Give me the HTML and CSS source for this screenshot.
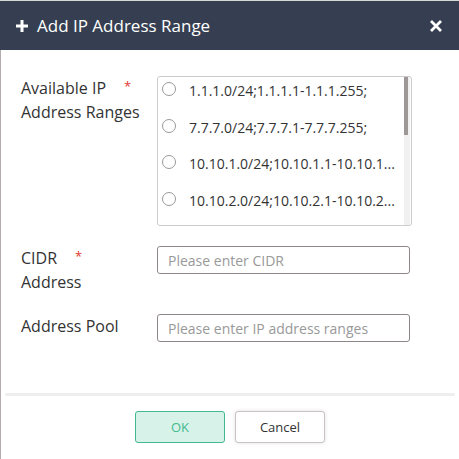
FILE: index.html
```html
<!DOCTYPE html>
<html lang="en">
<head>
  <meta charset="UTF-8">
  <meta name="viewport" content="width=device-width, initial-scale=1.0">
  <title>Add IP Address Range</title>
  <link rel="stylesheet" href="styles.css">
</head>
<body>
  <div class="dialog">
    <div class="dialog-head">
      <svg class="plus" width="12" height="12" viewBox="0 0 12 12">
        <path d="M6 0v12M0 6h12" stroke="#fff" stroke-width="3"/>
      </svg>
      <span class="title">Add IP Address Range</span>
      <svg class="close" width="12" height="12" viewBox="0 0 12 12">
        <path d="M1 1L11 11M11 1L1 11" stroke="#fff" stroke-width="2.8"/>
      </svg>
    </div>

    <div class="dialog-body">
      <div class="row">
        <div class="label">Available IP<span class="req">*</span><br>Address Ranges</div>
        <div class="field">
          <div class="range-list">
            <div class="options">
              <label class="opt"><span class="radio"></span><span class="opt-text">1.1.1.0/24;1.1.1.1-1.1.1.255;</span></label>
              <label class="opt"><span class="radio"></span><span class="opt-text">7.7.7.0/24;7.7.7.1-7.7.7.255;</span></label>
              <label class="opt"><span class="radio"></span><span class="opt-text">10.10.1.0/24;10.10.1.1-10.10.1...</span></label>
              <label class="opt"><span class="radio"></span><span class="opt-text">10.10.2.0/24;10.10.2.1-10.10.2...</span></label>
            </div>
            <div class="scroll"><div class="thumb"></div></div>
          </div>
        </div>
      </div>

      <div class="row">
        <div class="label">CIDR<span class="req">*</span><br>Address</div>
        <div class="field">
          <input class="input" type="text" placeholder="Please enter CIDR">
        </div>
      </div>

      <div class="row">
        <div class="label">Address Pool</div>
        <div class="field">
          <input class="input" type="text" placeholder="Please enter IP address ranges">
        </div>
      </div>
    </div>

    <div class="dialog-foot">
      <button class="btn btn-ok">OK</button>
      <button class="btn btn-cancel">Cancel</button>
    </div>
  </div>
</body>
</html>
```

FILE: styles.css
```css
body {
  margin: 0;
  background: #fff;
  font-family: "Open Sans", "Noto Sans", sans-serif;
  color: #333;
}

.dialog {
  width: 459px;
  height: 459px;
  border-top: 1px solid #d6d6d6;
  box-sizing: border-box;
  display: flex;
  flex-direction: column;
}

.dialog-head {
  height: 49px;
  flex: none;
  background: #353f51;
  display: flex;
  align-items: center;
  padding: 0 17px 0 16px;
}
.plus {
  margin-right: 9px;
}
.title {
  color: #fff;
  font-size: 17px;
  flex: 1;
}

.dialog-body {
  border-left: 1px solid #b3adad;
  padding: 26px 0 0 20px;
  flex: 1;
}

.row {
  display: flex;
  margin-bottom: 20px;
}
.label {
  width: 136px;
  font-size: 16px;
  line-height: 24px;
  flex: none;
}
.req {
  color: #e0362c;
  font-size: 13px;
  margin-left: 18px;
  vertical-align: top;
  line-height: 20px;
}

.field {
  width: 255px;
}

.range-list {
  height: 150px;
  border: 1px solid #ccc;
  border-radius: 3px;
  box-sizing: border-box;
  display: flex;
  overflow: hidden;
}
.options {
  flex: 1;
  min-width: 0;
  padding: 5px 0 0 4px;
}
.opt {
  display: flex;
  align-items: flex-start;
  height: 36.5px;
  font-size: 14px;
}
.radio {
  width: 12px;
  height: 12px;
  border: 1px solid #999;
  border-radius: 50%;
  flex: none;
  margin-right: 13px;
}
.opt-text {
  white-space: nowrap;
  margin-top: -1px;
}
.scroll {
  width: 6px;
  background: #f1f1f1;
  margin-right: 1px;
}
.thumb {
  width: 4px;
  height: 58px;
  background: #9e9797;
}

.input {
  width: 253px;
  height: 28px;
  border: 1px solid #8e8787;
  border-radius: 3px;
  box-sizing: border-box;
  padding: 0 10px;
  font-family: inherit;
  font-size: 14px;
  color: #333;
  outline: none;
}
.input::placeholder {
  color: #999;
}

.dialog-foot {
  height: 66px;
  flex: none;
  position: relative;
  border-left: 1px solid #b3adad;
  display: flex;
  justify-content: center;
  gap: 10px;
  padding-top: 18px;
  box-sizing: border-box;
}
/* thin shaded rule above the buttons */
.dialog-foot::before {
  content: "";
  position: absolute;
  left: 4px;
  right: 4px;
  top: 0;
  height: 3px;
  border-radius: 2px;
  background: #eeeeee;
}
.btn {
  width: 90px;
  height: 32px;
  border-radius: 3px;
  font-family: inherit;
  font-size: 13px;
}
.btn-ok {
  background: #d7f2e9;
  border: 1px solid #45b98e;
  color: #45b98e;
}
.btn-cancel {
  background: #fff;
  border: 1px solid #c8c2c2;
  color: #333;
  box-shadow: 0 0 4px #e2e2e2;
}
```
